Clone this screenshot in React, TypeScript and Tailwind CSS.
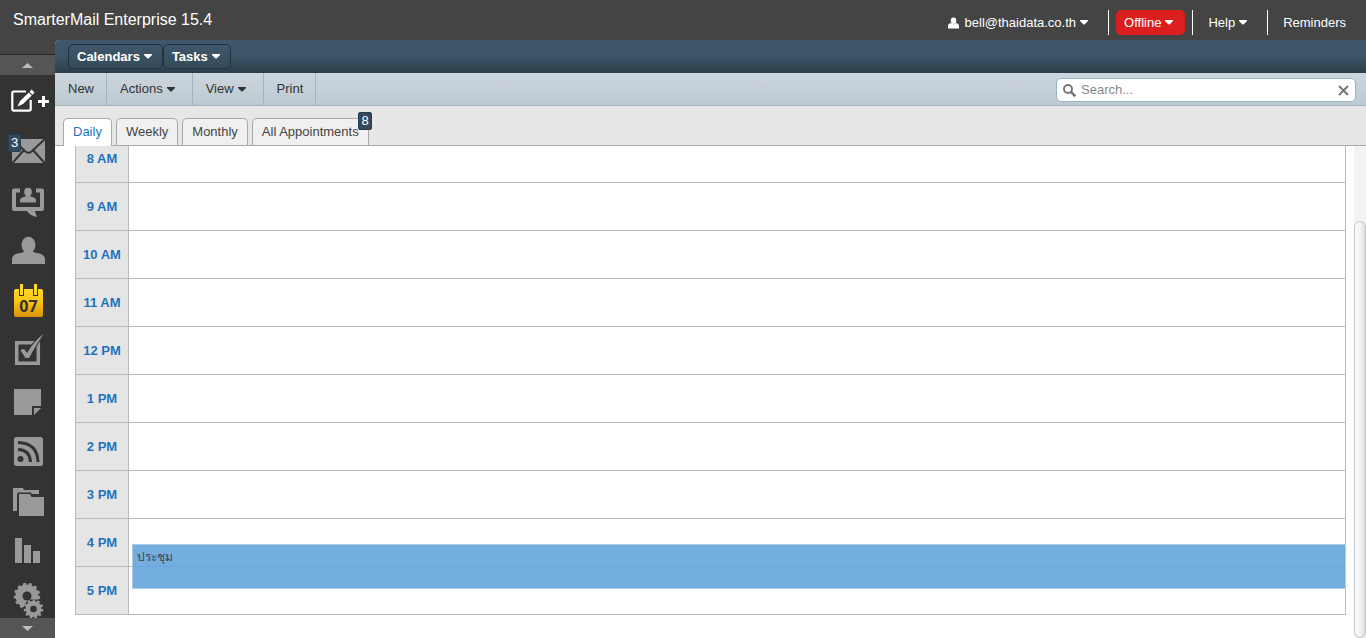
import React, { useState } from 'react';
import clsx from 'clsx';

const hours = ['8 AM', '9 AM', '10 AM', '11 AM', '12 PM', '1 PM', '2 PM', '3 PM', '4 PM', '5 PM'];

const appointments: { [key: string]: string } = { '4 PM': 'ประชุม' };

const tabs = [
  { label: 'Daily' },
  { label: 'Weekly' },
  { label: 'Monthly' },
  { label: 'All Appointments', count: 8 },
];

const Caret = () => (
  <svg width="8" height="5" viewBox="0 0 8 5" className="ml-1 inline-block shrink-0 fill-current" aria-hidden="true">
    <path d="M0 0h8v1L4.500 4.500h-1L0 1z" />
  </svg>
);

const Badge = ({ children }: { children: React.ReactNode }) => (
  <span className="block rounded-[2px] border border-[#24404f] bg-[#34495e] px-[2px] text-[13px] leading-4 text-white">
    {children}
  </span>
);

// Toothed wheel: a disc with a dashed ring for the teeth
const Gear = ({ cx, cy, r, hole, teeth }: { cx: number; cy: number; r: number; hole: number; teeth: number }) => {
  const dash = (Math.PI * 2 * r) / (teeth * 2);
  return (
    <g>
      <circle cx={cx} cy={cy} r={r + 2} fill="#333" />
      <circle cx={cx} cy={cy} r={r} fill="#999" />
      <circle cx={cx} cy={cy} r={r} fill="none" stroke="#999" strokeWidth="3.500" strokeDasharray={`${dash} ${dash}`} />
      <circle cx={cx} cy={cy} r={hole} fill="#333" />
    </g>
  );
};

const navItems = [
  {
    name: 'Compose',
    icon: (
      <>
        <path d="M26 16.500H14q-1.700 0-1.700 1.700V34q0 1.700 1.700 1.700H29q1.700 0 1.700-1.700V25" fill="none" stroke="#fff" strokeWidth="2.200" />
        <path d="M17.500 31.500l2.500-5.500 8.800-8.500 3 3-8.800 8.500zM29.600 16.700L31.600 14.500l3 3-2.100 2.200z" fill="#fff" />
        <path d="M38 26.500h11M43.500 21v11" stroke="#fff" strokeWidth="3" />
      </>
    ),
  },
  {
    name: 'Email',
    badge: '3',
    icon: (
      <>
        <path d="M12 14h33v24H12z" fill="#999" />
        <path d="M12 14l13.500 12.500q3 2.500 6 0L45 14M12 38.500l11.500-13M45 38.500l-11.500-13" fill="none" stroke="#333" strokeWidth="2" />
      </>
    ),
  },
  {
    name: 'Chat',
    icon: (
      <>
        <path d="M20 15.500h-6V34h28V15.500h-6" fill="none" stroke="#999" strokeWidth="4" strokeLinejoin="round" />
        <path d="M26 35h8.500l2.500 7q-7-1-11-7z" fill="#999" />
        <ellipse cx="28" cy="17" rx="3.800" ry="4.200" fill="#999" />
        <path d="M20 27.500V25q0-2.500 5.500-3.500l1-1.500h3l1 1.500q5.500 1 5.500 3.500v2.500z" fill="#999" />
      </>
    ),
  },
  {
    name: 'Contacts',
    icon: (
      <>
        <ellipse cx="28.500" cy="20" rx="7" ry="8.300" fill="#999" />
        <path d="M12 39v-4.500q0-5.500 8-6.500 4-.5 5-3h7q1 2.500 5 3 8 1 8 6.500V39z" fill="#999" />
      </>
    ),
  },
  {
    name: 'Calendar',
    icon: (
      <>
        <defs>
          <linearGradient id="calendarFill" x1="0" y1="0" x2="0" y2="1">
            <stop offset="0" stopColor="#ffd52e" />
            <stop offset="0.450" stopColor="#f9c512" />
            <stop offset="1" stopColor="#dc930c" />
          </linearGradient>
        </defs>
        <rect x="14" y="14" width="29" height="28" rx="2" fill="url(#calendarFill)" />
        <path d="M19 14h5v7h-5zM33 14h5v7h-5z" fill="#333" />
        <path d="M20 9h3v11h-3zM34 9h3v11h-3z" fill="#ffd52e" />
        <text x="28.500" y="37" textAnchor="middle" className="font-['Open_Sans',sans-serif] text-base font-bold" fill="#333">
          07
        </text>
      </>
    ),
  },
  {
    name: 'Tasks',
    icon: (
      <>
        <path d="M16.700 17.700h21.600v20.600H16.700z" fill="none" stroke="#999" strokeWidth="3.500" />
        <path d="M20.500 25.500q3.500-3.500 5.500 1l1 1.500Q34 16 43.500 9 36 20 29 33h-3.500z" fill="#999" stroke="#333" strokeWidth="2" paintOrder="stroke" />
      </>
    ),
  },
  {
    name: 'Notes',
    icon: (
      <path d="M14 14h27v17H32v9H14zM34 33H41l-7 7z" fill="#999" />
    ),
  },
  {
    name: 'RSS Feeds',
    icon: (
      <>
        <rect x="14" y="12" width="29" height="29" rx="2.500" fill="#999" />
        <circle cx="20.500" cy="34" r="3" fill="#333" />
        <path d="M18 24.500Q30 25 30.500 37M18 17.500Q37.500 18 38 37" fill="none" stroke="#333" strokeWidth="3" />
      </>
    ),
  },
  {
    name: 'File Storage',
    icon: (
      <>
        <path d="M13 13h10l1 2h15v4H17v17h-4z" fill="#999" />
        <path d="M19 19h11l1.500 3H44v19H19z" fill="#999" stroke="#333" strokeWidth="3" paintOrder="stroke" />
      </>
    ),
  },
  {
    name: 'Reports',
    icon: <path d="M15 13h7v25h-7zM24 20h7v18h-7zM33 26h7v12h-7z" fill="#999" />,
  },
  {
    name: 'Settings',
    icon: (
      <>
        <Gear cx={27} cy={21} r={11.500} hole={4.500} teeth={13} />
        <Gear cx={33.500} cy={34} r={8} hole={3.300} teeth={11} />
      </>
    ),
  },
];

const Header = () => (
  <header className="flex h-10 shrink-0 items-start justify-between pr-5 text-[13px] text-white">
    <h1 className="pt-2 pl-[13px] text-base leading-6">SmarterMail Enterprise 15.4</h1>
    <div className="flex pt-[10px]">
      <button className="flex h-[25px] items-center pr-5">
        <svg width="11" height="12" viewBox="0 0 12 12" className="mr-[6px] fill-white" aria-hidden="true">
          <ellipse cx="6" cy="3.500" rx="3" ry="3.500" />
          <path d="M0 12V9q0-2.500 3-3 3 2.500 6 0 3 .5 3 3v3z" />
        </svg>
        bell@thaidata.co.th
        <Caret />
      </button>
      <div className="flex h-[25px] border-l border-white px-[7px]">
        <button className="flex items-center rounded-[5px] bg-[#db1f1f] pr-3 pl-2">
          Offline
          <Caret />
        </button>
      </div>
      <button className="flex h-[25px] items-center border-l border-white pr-5 pl-[15px]">
        Help
        <Caret />
      </button>
      <button className="h-[25px] border-l border-white pl-[15px]">Reminders</button>
    </div>
  </header>
);

const Sidebar = () => (
  <nav className="mt-[14px] flex w-[55px] shrink-0 flex-col bg-[#333]">
    <button aria-label="Scroll up" className="flex h-[21px] shrink-0 items-center justify-center border-t border-[#2a2a2a] bg-[#555]">
      <svg width="11" height="5" viewBox="0 0 11 5" className="fill-[#bbb]">
        <path d="M0 5h11L5.500 0z" />
      </svg>
    </button>
    <div className="min-h-0 flex-1 overflow-hidden">
      {navItems.map((item) => (
        <a key={item.name} href="#" aria-label={item.name} className="relative block h-[50px]">
          <svg width="55" height="50" viewBox="0 0 55 50">
            {item.icon}
          </svg>
          {item.badge && (
            <span className="absolute top-[9px] left-2">
              <Badge>{item.badge}</Badge>
            </span>
          )}
        </a>
      ))}
    </div>
    <button aria-label="Scroll down" className="flex h-5 shrink-0 items-center justify-center bg-[#555]">
      <svg width="11" height="5" viewBox="0 0 11 5" className="fill-[#bbb]">
        <path d="M0 0h11L5.500 5z" />
      </svg>
    </button>
  </nav>
);

const menuButton =
  'flex h-[25px] items-center rounded-[5px] border border-[#22333f] bg-linear-to-b from-[#40586a] to-[#334b59] pr-[10px] pl-2 text-[13px] font-bold text-white';
const toolButton = 'flex items-center border-r border-[#9fb4bd] pr-3 pl-[13px]';

const Toolbar = () => {
  const [query, setQuery] = useState('');

  return (
    <div className="flex h-[33px] shrink-0 items-stretch justify-between border-b border-[#9fb4bd] bg-linear-to-b from-[#cdd5dd] to-[#bccad1] pr-[10px] text-[13px] text-[#333]">
      <div className="flex">
        <button className={toolButton}>New</button>
        <button className={toolButton}>
          Actions
          <Caret />
          <span className="w-[5px]" />
        </button>
        <button className={toolButton}>
          View
          <Caret />
          <span className="w-[5px]" />
        </button>
        <button className={toolButton}>Print</button>
      </div>
      <div className="mt-[5px] flex h-6 w-[300px] items-center rounded-[5px] border border-[#9ab3bf] bg-white px-[6px]">
        <svg width="13" height="13" viewBox="0 0 13 13" fill="none" stroke="#777" strokeWidth="2" aria-hidden="true">
          <circle cx="5" cy="5" r="4" />
          <path d="M8 8l4.300 4.300" strokeWidth="2.600" />
        </svg>
        <input
          type="text"
          aria-label="Search"
          placeholder="Search..."
          value={query}
          onChange={(e) => setQuery(e.target.value)}
          className="ml-[5px] min-w-0 flex-1 outline-none placeholder:text-[#888]"
        />
        <button aria-label="Clear search" onClick={() => setQuery('')}>
          <svg width="11" height="11" viewBox="0 0 11 11" stroke="#777" strokeWidth="2">
            <path d="M1 1l9 9M10 1l-9 9" />
          </svg>
        </button>
      </div>
    </div>
  );
};

const App = () => {
  const [activeTab, setActiveTab] = useState('Daily');

  return (
    <div className="flex h-screen flex-col overflow-hidden bg-[#444] font-['Liberation_Sans',Arial,sans-serif]">
      <Header />
      <div className="flex min-h-0 flex-1">
        <Sidebar />
        <main className="flex min-w-0 flex-1 flex-col overflow-hidden rounded-tl-[5px] bg-white">
          <div className="flex h-[33px] shrink-0 items-center bg-linear-to-b from-[#3f586b] via-[#3d5568] to-[#2b3e49] pl-[13px]">
            <button className={menuButton}>
              Calendars
              <Caret />
            </button>
            <button className={menuButton}>
              Tasks
              <Caret />
            </button>
          </div>

          <Toolbar />

          {/* View tabs */}
          <div className="flex h-10 shrink-0 items-end gap-1 border-b border-[#aaa] bg-[#e7e7e7] pl-2">
            {tabs.map((tab) => (
              <button
                key={tab.label}
                onClick={() => setActiveTab(tab.label)}
                className={clsx(
                  'relative rounded-t-[5px] border border-b-0 border-[#aaa] px-[9px] text-[13px]',
                  activeTab === tab.label ? '-mb-px h-7 bg-white pb-px text-[#1e73be]' : 'h-[27px] bg-[#f0f0f0] text-[#444]'
                )}
              >
                {tab.label}
                {tab.count && (
                  <span className="absolute -top-[7px] -right-1">
                    <Badge>{tab.count}</Badge>
                  </span>
                )}
              </button>
            ))}
          </div>

          <div className="flex min-h-0 flex-1">
            {/* Day grid, scrolled down to its last hours */}
            <div className="flex min-w-0 flex-1 flex-col justify-end overflow-hidden pr-2 pb-[23px] pl-5">
              <table className="w-full table-fixed border-separate border-spacing-0 border-l border-[#bbb]">
                <tbody>
                  {hours.map((hour) => (
                    <tr key={hour} className="h-12">
                      <th
                        scope="row"
                        className="w-[53px] border-r border-b border-[#bbb] bg-[#e5e5e5] text-center text-[13px] font-bold text-[#1e73be]"
                      >
                        {hour}
                      </th>
                      <td className="relative border-r border-b border-[#bbb]">
                        {appointments[hour] && (
                          <div className="absolute top-[25px] -right-px left-[3px] z-10 h-[45px] border border-[#a9d0e8] bg-[#65a5da]/90 px-1 pt-1 font-['Liberation_Sans','Noto_Sans',sans-serif] text-xs text-[#444]">
                            {appointments[hour]}
                          </div>
                        )}
                      </td>
                    </tr>
                  ))}
                </tbody>
              </table>
            </div>
            {/* Scrollbar */}
            <div className="flex w-3 shrink-0 flex-col bg-[#f2f4f4] pt-[75px]">
              <div className="flex-1 rounded-full border border-[#c4c4c4] bg-linear-to-r from-[#fafafa] via-[#f4f4f4] to-[#dcdcdc]" />
            </div>
          </div>
        </main>
      </div>
    </div>
  );
};

export default App;
